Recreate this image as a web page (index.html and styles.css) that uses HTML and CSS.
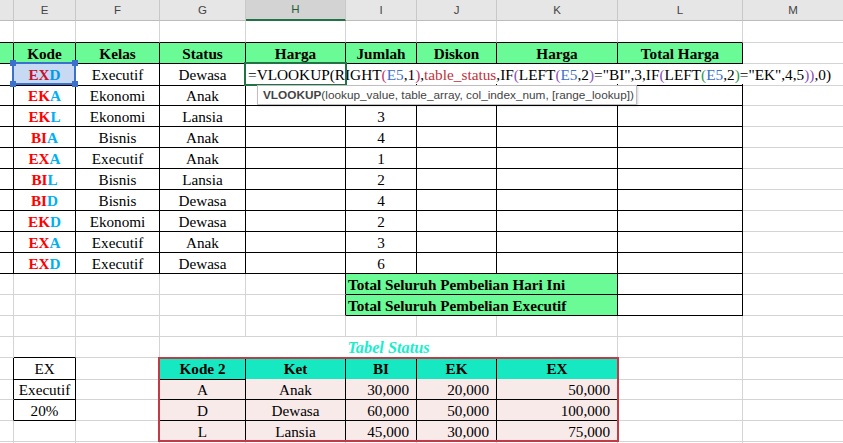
FILE: index.html
```html
<!DOCTYPE html>
<html>
<head>
<meta charset="utf-8">
<link rel="stylesheet" href="styles.css">
</head>
<body>
<div class="sheet">
  <div class="row colhdr">
    <div class="hc"></div><div class="hc">E</div><div class="hc">F</div><div class="hc">G</div><div class="hc hsel">H</div><div class="hc">I</div><div class="hc">J</div><div class="hc">K</div><div class="hc">L</div><div class="hc">M</div>
  </div>
  <div class="row tall">
    <div class="c kb"></div><div class="c kb"></div><div class="c kb"></div><div class="c kb"></div><div class="c kb"></div><div class="c kb"></div><div class="c kb"></div><div class="c kb"></div><div class="c kb"></div><div class="c"></div>
  </div>
  <div class="row">
    <div class="c k g"></div><div class="c k g b">Kode</div><div class="c k g b">Kelas</div><div class="c k g b">Status</div><div class="c k g b">Harga</div><div class="c k g b">Jumlah</div><div class="c k g b">Diskon</div><div class="c k g b">Harga</div><div class="c k g b">Total Harga</div><div class="c"></div>
  </div>
  <div class="row">
    <div class="c k"></div>
    <div class="c k refcell"><span class="kode"><span class="red">EX</span><span class="blu">D</span></span><span class="refbox"><i class="hd tl"></i><i class="hd tr"></i><i class="hd bl"></i><i class="hd br"></i></span></div>
    <div class="c k">Executif</div><div class="c k">Dewasa</div>
    <div class="c k editcell">
      <span class="ftext">=VLOOKUP(RIGHT<span class="p1">(</span><span class="ref">E5</span>,1<span class="p1">)</span>,<span class="nm">table_status</span>,IF<span class="p2">(</span>LEFT<span class="p2">(</span><span class="ref">E5</span>,2<span class="p2">)</span>="BI",3,IF<span class="p2">(</span>LEFT<span class="p3">(</span><span class="ref">E5</span>,2<span class="p3">)</span>="EK",4,5<span class="p2">)</span><span class="p2">)</span>,0)</span>
      <span class="focus"></span>
      <span class="tip"><b>VLOOKUP</b>(lookup_value, table_array, col_index_num, [range_lookup])</span>
    </div>
    <div class="c k"></div><div class="c k"></div><div class="c k"></div><div class="c k"></div><div class="c"></div>
  </div>
  <div class="row">
    <div class="c k"></div><div class="c k kode"><span class="red">EK</span><span class="blu">A</span></div><div class="c k">Ekonomi</div><div class="c k">Anak</div><div class="c k"></div><div class="c k"></div><div class="c k"></div><div class="c k"></div><div class="c k"></div><div class="c"></div>
  </div>
  <div class="row">
    <div class="c k"></div><div class="c k kode"><span class="red">EK</span><span class="blu">L</span></div><div class="c k">Ekonomi</div><div class="c k">Lansia</div><div class="c k"></div><div class="c k">3</div><div class="c k"></div><div class="c k"></div><div class="c k"></div><div class="c"></div>
  </div>
  <div class="row">
    <div class="c k"></div><div class="c k kode"><span class="red">BI</span><span class="blu">A</span></div><div class="c k">Bisnis</div><div class="c k">Anak</div><div class="c k"></div><div class="c k">4</div><div class="c k"></div><div class="c k"></div><div class="c k"></div><div class="c"></div>
  </div>
  <div class="row">
    <div class="c k"></div><div class="c k kode"><span class="red">EX</span><span class="blu">A</span></div><div class="c k">Executif</div><div class="c k">Anak</div><div class="c k"></div><div class="c k">1</div><div class="c k"></div><div class="c k"></div><div class="c k"></div><div class="c"></div>
  </div>
  <div class="row">
    <div class="c k"></div><div class="c k kode"><span class="red">BI</span><span class="blu">L</span></div><div class="c k">Bisnis</div><div class="c k">Lansia</div><div class="c k"></div><div class="c k">2</div><div class="c k"></div><div class="c k"></div><div class="c k"></div><div class="c"></div>
  </div>
  <div class="row">
    <div class="c k"></div><div class="c k kode"><span class="red">BI</span><span class="blu">D</span></div><div class="c k">Bisnis</div><div class="c k">Dewasa</div><div class="c k"></div><div class="c k">4</div><div class="c k"></div><div class="c k"></div><div class="c k"></div><div class="c"></div>
  </div>
  <div class="row">
    <div class="c k"></div><div class="c k kode"><span class="red">EK</span><span class="blu">D</span></div><div class="c k">Ekonomi</div><div class="c k">Dewasa</div><div class="c k"></div><div class="c k">2</div><div class="c k"></div><div class="c k"></div><div class="c k"></div><div class="c"></div>
  </div>
  <div class="row">
    <div class="c k"></div><div class="c k kode"><span class="red">EX</span><span class="blu">A</span></div><div class="c k">Executif</div><div class="c k">Anak</div><div class="c k"></div><div class="c k">3</div><div class="c k"></div><div class="c k"></div><div class="c k"></div><div class="c"></div>
  </div>
  <div class="row">
    <div class="c k"></div><div class="c k kode"><span class="red">EX</span><span class="blu">D</span></div><div class="c k">Executif</div><div class="c k">Dewasa</div><div class="c k"></div><div class="c k">6</div><div class="c k"></div><div class="c k"></div><div class="c k"></div><div class="c"></div>
  </div>
  <div class="row">
    <div class="c"></div><div class="c"></div><div class="c"></div><div class="c"></div><div class="c kr"></div><div class="c k g b l s3">Total Seluruh Pembelian Hari Ini</div><div class="c k"></div><div class="c"></div>
  </div>
  <div class="row">
    <div class="c"></div><div class="c"></div><div class="c"></div><div class="c"></div><div class="c kr"></div><div class="c k g b l s3">Total Seluruh Pembelian Executif</div><div class="c k"></div><div class="c"></div>
  </div>
  <div class="row">
    <div class="c"></div><div class="c"></div><div class="c"></div><div class="c"></div><div class="c"></div><div class="c"></div><div class="c"></div><div class="c"></div><div class="c"></div><div class="c"></div>
  </div>
  <div class="row">
    <div class="c"></div><div class="c kb"></div><div class="c"></div><div class="c kb s5 title">Tabel Status</div><div class="c"></div><div class="c"></div>
  </div>
  <div class="row">
    <div class="c kr"></div><div class="c k">EX</div><div class="c kr"></div>
    <div class="c k t b boxcell">Kode 2<span class="redbox"></span></div><div class="c k t b">Ket</div><div class="c k t b">BI</div><div class="c k t b">EK</div><div class="c k t b">EX</div><div class="c"></div><div class="c"></div>
  </div>
  <div class="row">
    <div class="c kr"></div><div class="c k">Executif</div><div class="c kr"></div>
    <div class="c k p">A</div><div class="c k p">Anak</div><div class="c k p r">30,000</div><div class="c k p r">20,000</div><div class="c k p r">50,000</div><div class="c"></div><div class="c"></div>
  </div>
  <div class="row">
    <div class="c kr"></div><div class="c k">20%</div><div class="c kr"></div>
    <div class="c k p">D</div><div class="c k p">Dewasa</div><div class="c k p r">60,000</div><div class="c k p r">50,000</div><div class="c k p r">100,000</div><div class="c"></div><div class="c"></div>
  </div>
  <div class="row">
    <div class="c"></div><div class="c"></div><div class="c kr"></div>
    <div class="c k p">L</div><div class="c k p">Lansia</div><div class="c k p r">45,000</div><div class="c k p r">30,000</div><div class="c k p r">75,000</div><div class="c"></div><div class="c"></div>
  </div>
  <div class="row">
    <div class="c"></div><div class="c"></div><div class="c"></div><div class="c"></div><div class="c"></div><div class="c"></div><div class="c"></div><div class="c"></div><div class="c"></div><div class="c"></div>
  </div>
</div>
</body>
</html>
```
FILE: styles.css
```css
html, body {
  margin: 0;
  padding: 0;
  background: #fff;
}
body {
  width: 843px;
  height: 443px;
  overflow: hidden;
}
.sheet {
  width: 843px;
}
.row {
  display: grid;
  grid-template-columns: 14px 62px 84px 86px 100px 71px 80px 121px 125px 101px;
  height: 21px;
}
.row.tall {
  height: 22px;
}
.hc {
  box-sizing: border-box;
  background: #e6e6e6;
  border-right: 1px solid #c8c8c8;
  border-bottom: 1px solid #bcbcbc;
  font: 11.5px "Liberation Sans", Arial, sans-serif;
  color: #444;
  text-align: center;
  line-height: 20px;
}
.hc.hsel {
  background: #d3d3d3;
  color: #1e5e3a;
  border-bottom: 2px solid #217346;
  line-height: 19px;
}
.c {
  box-sizing: border-box;
  border-right: 1px solid #d4d4d4;
  border-bottom: 1px solid #d4d4d4;
  font: 15.2px "Liberation Serif", "Times New Roman", serif;
  color: #000;
  line-height: 21px;
  text-align: center;
  white-space: nowrap;
  overflow: hidden;
}
.k { border-right-color: #000; border-bottom-color: #000; }
.kb { border-bottom-color: #000; }
.kr { border-right-color: #000; }
.g { background: #6afa96; }
.t { background: #16e9c1; }
.p { background: #f9eaea; }
.b { font-weight: bold; }
.l { text-align: left; padding-left: 2px; }
.r { text-align: right; padding-right: 7px; }
.s3 { grid-column: span 3; }
.s5 { grid-column: span 5; }
.title {
  font-size: 16.3px;
  font-weight: bold;
  font-style: italic;
  color: #19eecb;
}
.kode { font-weight: bold; }
.red { color: #ff0000; }
.blu { color: #00b0f0; }

.refcell {
  position: relative;
  overflow: visible;
  z-index: 2;
}
.refbox {
  position: absolute;
  left: -2px;
  top: -2px;
  width: 64px;
  height: 23px;
  box-sizing: border-box;
  border: 2px solid #3b70cc;
  background: rgba(0, 80, 200, 0.22);
}
.hd {
  position: absolute;
  width: 6px;
  height: 6px;
  background: #3b70cc;
}
.hd.tl { left: -4px; top: -4px; }
.hd.tr { right: -4px; top: -4px; }
.hd.bl { left: -4px; bottom: -4px; }
.hd.br { right: -4px; bottom: -4px; }

.editcell {
  position: relative;
  overflow: visible;
  z-index: 3;
}
.ftext {
  position: absolute;
  left: 0;
  top: 0;
  width: 589px;
  height: 20px;
  box-sizing: border-box;
  padding-left: 2px;
  background: #fff;
  text-align: left;
  line-height: 21px;
  font-size: 15.3px;
}
.ref { color: #3a6fd2; }
.p1 { color: #c2336b; }
.p2 { color: #8b4fc0; }
.p3 { color: #2e9a4a; }
.nm { color: #c0313c; }
.focus {
  position: absolute;
  left: -2px;
  top: -2px;
  right: -2px;
  bottom: -1px;
  border: 2px solid #217346;
}
.tip {
  position: absolute;
  left: 11px;
  top: 21px;
  width: 380px;
  height: 20px;
  box-sizing: border-box;
  background: #fff;
  border: 1px solid #bfbfbf;
  box-shadow: 1px 1px 2px rgba(0, 0, 0, 0.18);
  font: 11.8px "Liberation Sans", Arial, sans-serif;
  color: #444;
  line-height: 18px;
  text-align: left;
  padding-left: 5px;
}
.tip b { color: #444; }

.boxcell {
  position: relative;
  overflow: visible;
  z-index: 2;
}
.redbox {
  position: absolute;
  left: -2px;
  top: -1px;
  width: 461px;
  height: 85px;
  box-sizing: border-box;
  border: 2px solid #c23a45;
}
```
